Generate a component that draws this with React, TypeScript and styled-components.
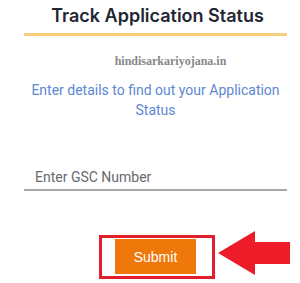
import styled, { createGlobalStyle } from "styled-components"

const GlobalStyle = createGlobalStyle`
  body {
    margin: 0;
    background: #ffffff;
    font-family: Roboto, "Liberation Sans", sans-serif;
  }
`

const Container = styled.div`
  width: 263px;
  margin-left: 24px;
  display: flex;
  flex-direction: column;
`

const Header = styled.header`
  padding-top: 4px;
  padding-bottom: 5px;
  border-bottom: 3px solid #f6ce7e;
  display: flex;
  justify-content: center;
`

const Title = styled.h1`
  margin: 0 0 0 4px;
  font-family: Inter, "Liberation Sans", sans-serif;
  font-size: 18px;
  line-height: 24px;
  font-weight: 600;
  color: #1f2733;
`

const Watermark = styled.div`
  margin-top: 17px;
  margin-left: 30px;
  text-align: center;
  font-family: "Liberation Serif", serif;
  font-weight: 700;
  font-size: 12px;
  line-height: 16px;
  color: #888888;
`

const Hint = styled.p`
  margin: 11px 0 0;
  text-align: center;
  white-space: nowrap;
  font-size: 14px;
  line-height: 20px;
  color: #5c89d0;
`

const Input = styled.input`
  margin-top: 39px;
  height: 32px;
  box-sizing: border-box;
  border: none;
  border-bottom: 2px solid #a8a8a8;
  padding: 6px 11px 0;
  font-family: inherit;
  font-size: 14px;
  color: #333;
  outline: none;
  &::placeholder {
    color: #666a70;
  }
`

const Actions = styled.div`
  margin-top: 44px;
  padding-left: 75px;
  display: flex;
  gap: 3px;
`

const Highlight = styled.div`
  width: 116px;
  height: 44px;
  box-sizing: border-box;
  border: 3px solid #e31e2c;
  padding: 1px 16px 2px 13px;
  display: flex;
  align-items: center;
`

const SubmitButton = styled.button`
  width: 81px;
  height: 35px;
  border: none;
  background: #ef780a;
  color: #ffffff;
  font-family: "Liberation Sans", Arial, sans-serif;
  font-size: 14px;
  font-weight: 400;
  cursor: pointer;
`

const Arrow = styled.svg`
  margin-top: -4px;
  flex-shrink: 0;
`

export default function App() {
  return (
    <>
      <GlobalStyle />
      <Container>
        <Header>
          <Title>Track Application Status</Title>
        </Header>
        <Watermark>hindisarkariyojana.in</Watermark>
        <Hint>
          Enter details to find out your Application
          <br />
          Status
        </Hint>
        <Input placeholder="Enter GSC Number" />
        <Actions>
          <Highlight>
            <SubmitButton>Submit</SubmitButton>
          </Highlight>
          <Arrow width="72" height="44" viewBox="0 0 72 44">
            <path d="M0 22 L37 0 L37 11 L72 11 L72 33 L37 33 L37 44 Z" fill="#ec1c29" />
          </Arrow>
        </Actions>
      </Container>
    </>
  )
}
